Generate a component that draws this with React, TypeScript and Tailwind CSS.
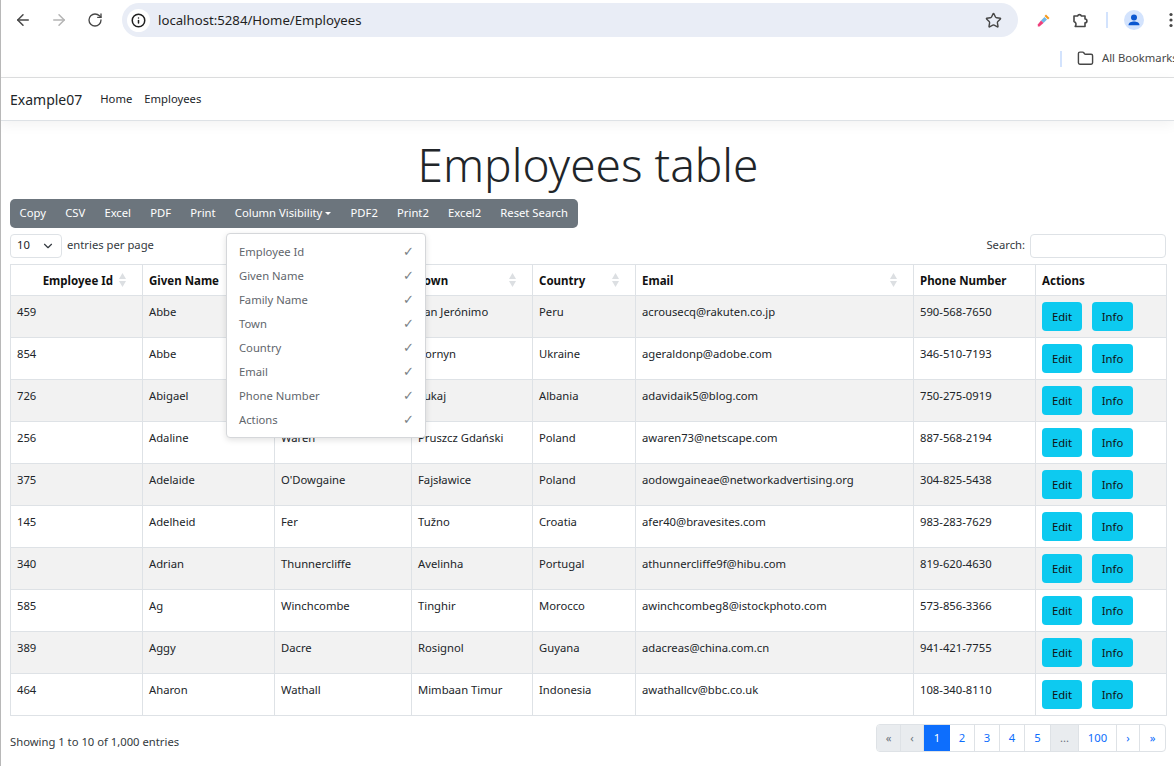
import { ArrowLeft, ArrowRight, RotateCw, Info, Star, Folder, ChevronDown } from "lucide-react";

const employees = [
  ["459", "Abbe", "Crousecq", "San Jerónimo", "Peru", "acrousecq@rakuten.co.jp", "590-568-7650"],
  ["854", "Abbe", "Geraldon", "Kornyn", "Ukraine", "ageraldonp@adobe.com", "346-510-7193"],
  ["726", "Abigael", "Davidai", "Lukaj", "Albania", "adavidaik5@blog.com", "750-275-0919"],
  ["256", "Adaline", "Waren", "Pruszcz Gdański", "Poland", "awaren73@netscape.com", "887-568-2194"],
  ["375", "Adelaide", "O'Dowgaine", "Fajsławice", "Poland", "aodowgaineae@networkadvertising.org", "304-825-5438"],
  ["145", "Adelheid", "Fer", "Tužno", "Croatia", "afer40@bravesites.com", "983-283-7629"],
  ["340", "Adrian", "Thunnercliffe", "Avelinha", "Portugal", "athunnercliffe9f@hibu.com", "819-620-4630"],
  ["585", "Ag", "Winchcombe", "Tinghir", "Morocco", "awinchcombeg8@istockphoto.com", "573-856-3366"],
  ["389", "Aggy", "Dacre", "Rosignol", "Guyana", "adacreas@china.com.cn", "941-421-7755"],
  ["464", "Aharon", "Wathall", "Mimbaan Timur", "Indonesia", "awathallcv@bbc.co.uk", "108-340-8110"],
];

const toolbarButtons = ["Copy", "CSV", "Excel", "PDF", "Print", "Column Visibility", "PDF2", "Print2", "Excel2", "Reset Search"];
const columns = ["Employee Id", "Given Name", "Family Name", "Town", "Country", "Email", "Phone Number", "Actions"];

const pages = [
  { label: "«", w: "w-[24px]", off: true },
  { label: "‹", w: "w-[23px]", off: true },
  { label: "1", w: "w-[26px]", active: true },
  { label: "2", w: "w-[25px]" },
  { label: "3", w: "w-[25px]" },
  { label: "4", w: "w-[25px]" },
  { label: "5", w: "w-[26px]" },
  { label: "...", w: "w-[28px]", off: true },
  { label: "100", w: "w-[38px]" },
  { label: "›", w: "w-[23px]" },
  { label: "»", w: "w-[25px]" },
];

const SortIcon = () => (
  <svg width="7" height="16" viewBox="0 0 7 16" className="shrink-0">
    <path d="M3.5 1 L7 7 L0 7 Z" fill="#dcdfe2" />
    <path d="M0 9 L7 9 L3.5 15 Z" fill="#dcdfe2" />
  </svg>
);

const Dropper = () => (
  <svg width="16" height="16" viewBox="0 0 16 16">
    <path d="M10 2.5 L13.5 6 L12 7.5 L8.5 4 Z" fill="#f59a1e" />
    <path d="M8.5 5 L11 7.5 L7.5 11 L5 8.5 Z" fill="#6fb7e8" />
    <path d="M5 8.5 L7.5 11 L3.5 14.5 L1.8 14.5 L1.8 12.5 Z" fill="#ee3f7c" />
  </svg>
);

const ExtensionIcon = () => (
  <svg width="17" height="17" viewBox="0 0 17 17" fill="none" stroke="#474747" strokeWidth="1.6" strokeLinejoin="round">
    <path d="M2 4 H5.6 A2 2 0 0 1 9.4 4 H13 V7 A1.9 1.9 0 0 1 13 10.8 V14.5 H3.2 C4.6 12.5 4.2 10.5 2 9.5 Z" />
  </svg>
);

const Avatar = () => (
  <svg width="20" height="20" viewBox="0 0 20 20">
    <circle cx="10" cy="10" r="10" fill="#d3e3fd" />
    <circle cx="10" cy="7.6" r="3" fill="#0b57d0" />
    <path d="M4.5 15.2 C4.5 12.6 7.5 11.6 10 11.6 C12.5 11.6 15.5 12.6 15.5 15.2 Z" fill="#0b57d0" />
  </svg>
);

const Dots = () => (
  <svg width="4" height="16" viewBox="0 0 4 16">
    <circle cx="2" cy="2.5" r="1.6" fill="#474747" />
    <circle cx="2" cy="8" r="1.6" fill="#474747" />
    <circle cx="2" cy="13.5" r="1.6" fill="#474747" />
  </svg>
);

const Browser = () => (
  <div className="border-b border-[#dedfe0]">
    <div className="h-[40px] flex items-center">
      <div className="w-[121px] flex items-center shrink-0 pl-[13px] gap-[18px]">
        <ArrowLeft size={18} color="#474747" />
        <ArrowRight size={18} color="#b4b4b4" />
        <RotateCw size={16} color="#474747" className="ml-[1px]" />
      </div>
      <div className="w-[896px] h-[34px] rounded-full bg-[#e9edf6] flex items-center pl-[5px] pr-[16px]">
        <div className="w-[23px] h-[23px] rounded-full bg-white flex items-center justify-center">
          <Info size={15} color="#1f1f1f" strokeWidth={2.4} />
        </div>
        <span className="ml-[8px] pt-[1px] text-[13.2px] text-[#1f1f1f] flex-1">localhost:5284/Home/Employees</span>
        <Star size={17} color="#474747" strokeWidth={2} />
      </div>
      <div className="flex items-center flex-1 overflow-hidden">
        <div className="ml-[18px]"><Dropper /></div>
        <div className="ml-[20px]"><ExtensionIcon /></div>
        <div className="ml-[17px] w-[2px] h-[16px] bg-[#d3e3fd]"></div>
        <div className="ml-[16px]"><Avatar /></div>
        <div className="ml-[25px]"><Dots /></div>
      </div>
    </div>
    <div className="h-[37px] flex items-center pl-[1059px] whitespace-nowrap overflow-hidden">
      <div className="w-[2px] h-[16px] bg-[#d3e3fd] shrink-0"></div>
      <Folder size={17} color="#474747" className="ml-[15px] shrink-0" />
      <span className="ml-[8px] pb-[1px] text-[11.25px] text-[#474747]">All Bookmarks</span>
    </div>
  </div>
);

const Navbar = () => (
  <nav className="h-[43px] border-b border-[#dee2e6] flex items-center pl-[9px] shadow-[0_4px_12px_rgba(0,0,0,0.05)]">
    <span className="text-[14px] text-[#212529]">Example07</span>
    <a className="ml-[18px] pt-[1px] text-[11.25px] text-[#212529]">Home</a>
    <a className="ml-[12px] pt-[1px] text-[11.25px] text-[#212529]">Employees</a>
  </nav>
);

const ColumnMenu = () => (
  <div className="absolute left-[216px] top-[34px] w-[200px] h-[205px] bg-white border border-[#d5d7da] rounded-[4px] py-[6px] shadow-[0_2px_6px_rgba(0,0,0,0.12)] z-10">
    {columns.map((c) => (
      <div key={c} className="h-[24px] flex items-center justify-between pl-[12px] pr-[11px] text-[11.25px] text-[#5f666c]">
        <span>{c}</span>
        <span className="font-['DejaVu_Sans',sans-serif] text-[13px] text-[#7a7f85]">✓</span>
      </div>
    ))}
  </div>
);

export default function App() {
  return (
    <div className="h-screen overflow-hidden bg-white border-l border-[#b8b8b8] text-[#212529] font-['Noto_Sans','Open_Sans',sans-serif]">
      <Browser />
      <Navbar />
      <div className="pl-[9px] pr-[8px]">
        <h1 className="h-[78px] pt-[8px] flex items-center justify-center text-[46px] font-light text-[#212529] leading-none">Employees table</h1>
        <div className="relative">
          <div className="inline-flex h-[29px] items-center bg-[#6c757d] rounded-[5px] text-[11.25px] text-white">
            {toolbarButtons.map((b) => (
              <span key={b} className="px-[9.6px] flex items-center gap-[3px] whitespace-nowrap">
                {b}
                {b === "Column Visibility" && <span className="w-0 h-0 border-x-[3px] border-x-transparent border-t-[3px] border-t-white"></span>}
              </span>
            ))}
          </div>
          <ColumnMenu />
        </div>
        <div className="mt-[6px] h-[24px] flex items-center text-[11.25px]">
          <div className="w-[52px] h-[24px] border border-[#dee2e6] rounded-[4px] flex items-center justify-between px-[6px]">
            <span className="pb-[1px]">10</span>
            <ChevronDown size={14} color="#343a40" />
          </div>
          <span className="ml-[5px] pb-[1px] text-[#343a40]">entries per page</span>
          <span className="ml-auto pb-[1px] text-[#343a40]">Search:</span>
          <div className="ml-[5px] w-[136px] h-[24px] border border-[#dee2e6] rounded-[4px]"></div>
        </div>
        <table className="mt-[6px] w-[1156px] table-fixed border-collapse text-[11.25px]">
          <colgroup>
            <col className="w-[132px]" />
            <col className="w-[132px]" />
            <col className="w-[137px]" />
            <col className="w-[121px]" />
            <col className="w-[103px]" />
            <col className="w-[278px]" />
            <col className="w-[122px]" />
            <col className="w-[131px]" />
          </colgroup>
          <thead>
            <tr className="h-[31px]">
              {columns.map((c, i) => (
                <th key={c} className="border border-[#dee2e6] pl-[6px] pr-[16px] text-[11.5px] font-bold text-[#111]">
                  <div className={i === 0 ? "flex items-center justify-end gap-[6px]" : "flex items-center justify-between whitespace-nowrap"}>
                    <span className="pt-[1px]">{c}</span>
                    {i < 6 && <SortIcon />}
                  </div>
                </th>
              ))}
            </tr>
          </thead>
          <tbody>
            {employees.map((e, r) => (
              <tr key={e[0]} className={r % 2 === 0 ? "h-[42px] bg-[#f2f2f2]" : "h-[42px] bg-white"}>
                {e.map((v, i) => (
                  <td key={i} className="border border-[#dee2e6] px-[6px] pt-[8px] pb-[11px] align-top whitespace-nowrap overflow-hidden">{v}</td>
                ))}
                <td className="border border-[#dee2e6] px-[6px] align-middle">
                  <div className="flex gap-[10px]">
                    <button className="w-[40px] h-[29px] pt-[1px] rounded-[4px] bg-[#0dcaf0] text-[11.25px] text-[#111]">Edit</button>
                    <button className="w-[41px] h-[29px] pt-[1px] rounded-[4px] bg-[#0dcaf0] text-[11.25px] text-[#111]">Info</button>
                  </div>
                </td>
              </tr>
            ))}
          </tbody>
        </table>
        <div className="mt-[8px] flex items-center justify-between w-[1156px] text-[11.25px]">
          <span className="text-[#343a40] pt-[8px]">Showing 1 to 10 of 1,000 entries</span>
          <div className="flex h-[28px] border border-[#dee2e6] rounded-[4px] overflow-hidden">
            {pages.map((p) => (
              <span
                key={p.label}
                className={
                  p.active
                    ? `${p.w} flex items-center justify-center bg-[#0d6efd] text-white`
                    : p.off
                      ? `${p.w} flex items-center justify-center bg-[#e9ecef] text-[#6c757d] border-r border-[#dee2e6]`
                      : `${p.w} flex items-center justify-center text-[#0d6efd] border-r border-[#dee2e6] last:border-r-0`
                }
              >
                {p.label}
              </span>
            ))}
          </div>
        </div>
      </div>
    </div>
  );
}
